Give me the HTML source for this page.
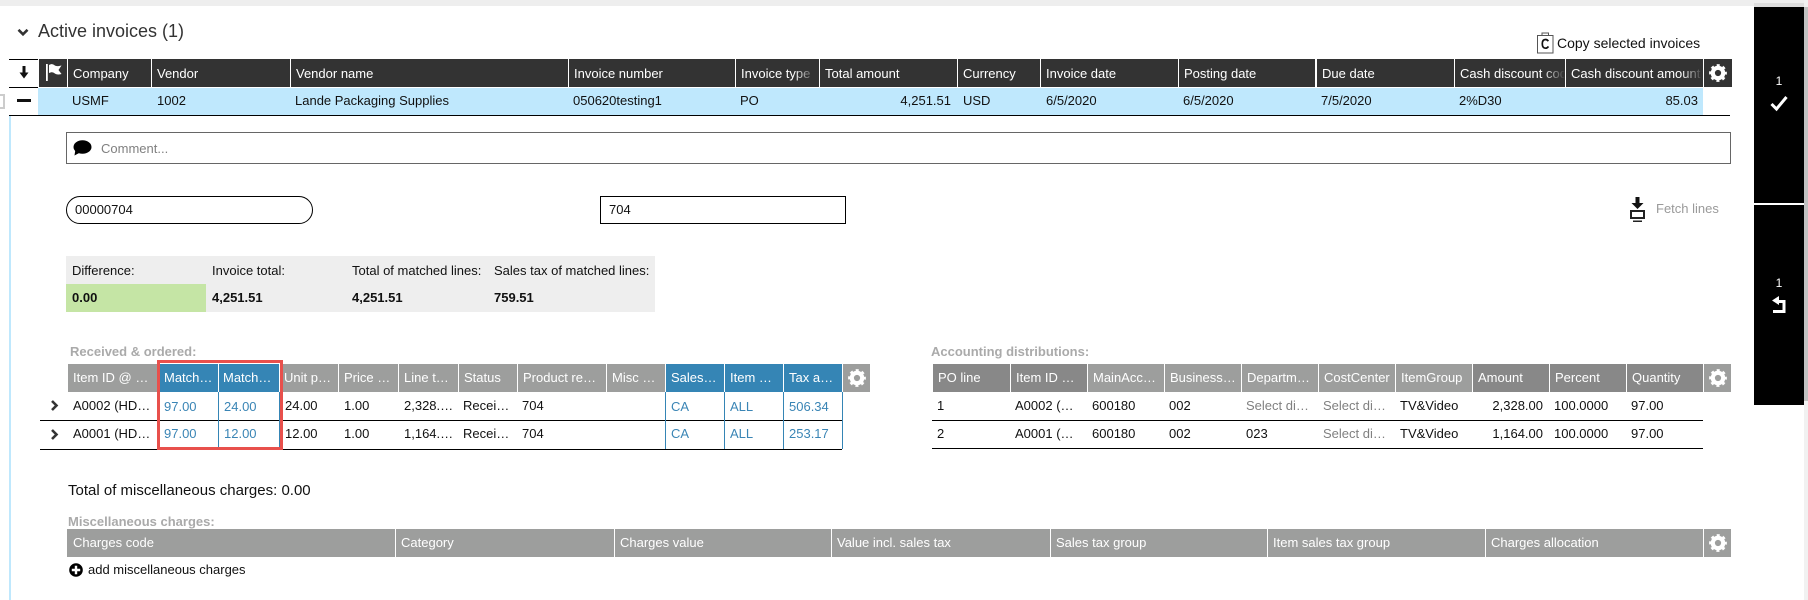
<!DOCTYPE html>
<html><head><meta charset="utf-8"><title>Active invoices</title>
<style>
html,body{margin:0;padding:0;background:#fff}
body{position:relative;width:1808px;height:600px;overflow:hidden;font-family:"Liberation Sans",Arial,sans-serif;font-size:13px;color:#111}
div,span.a{position:absolute;box-sizing:border-box}
.t{position:absolute;white-space:nowrap;line-height:16px;height:16px}
.r{position:absolute;white-space:nowrap;line-height:16px;height:16px;text-align:right}
.h{height:28px;line-height:28px;color:#fff;padding-left:5px;white-space:nowrap;overflow:hidden}
.d{top:59px;background:#333;line-height:30px}
.g{top:364px;background:#9d9e9d}
.k{top:364px;background:#888}
.b{top:364px;background:#3585b5;padding-left:5px}
.m{top:529px;background:#9d9e9d}
.bl{color:#3a85b5}
.mu{color:#808080}
.ln{height:1px;background:#000}
.vl{width:1px;background:#3585b5;top:392px;height:57px}
.lb{position:absolute;font-weight:bold;color:#aaa;white-space:nowrap;line-height:16px}
.f{top:59px;height:28px;width:22px;background:linear-gradient(90deg,rgba(51,51,51,0),#333)}
svg{position:absolute;display:block}
</style></head><body>
<svg width="0" height="0" style="position:absolute"><symbol id="gear" viewBox="-10 -10 20 20"><circle r="5.2" fill="none" stroke="#fff" stroke-width="4.2"/><circle r="7.4" fill="none" stroke="#fff" stroke-width="3" stroke-dasharray="2.9 2.91" stroke-dashoffset="1.45"/></symbol></svg>

<div style="left:0;top:0;width:1808px;height:6px;background:#eee"></div>
<div style="left:1754px;top:3px;width:50px;height:4px;background:#ddd"></div>

<svg style="left:17px;top:28px" width="12" height="9" viewBox="0 0 12 9"><path d="M1.5 1.8L6 6.3L10.5 1.8" fill="none" stroke="#333" stroke-width="2.6"/></svg>
<span class="t" style="left:38px;top:22px;font-size:18px;line-height:18px;height:18px;color:#333">Active invoices (1)</span>

<svg style="left:1537px;top:32px" width="17" height="22" viewBox="0 0 17 22"><path d="M.5 3.5H16V21H.5zM5 3.5V1H11.500V3.500" fill="none" stroke="#555" stroke-width="1"/><path d="M11.300 9.200C10.600 8 9.700 7.500 8.500 7.500C6.500 7.500 5.300 9 5.300 11.800C5.300 14.600 6.500 16.200 8.500 16.200C9.800 16.200 10.700 15.600 11.400 14.400" fill="none" stroke="#111" stroke-width="1.700"/></svg>
<span class="t" style="left:1557px;top:35px;font-size:14px">Copy selected invoices</span>

<!-- main table header -->
<div style="left:9px;top:59px;width:29px;height:1px;background:#000"></div>
<div style="left:9px;top:87px;width:29px;height:1px;background:#000"></div>
<svg style="left:19px;top:66px" width="10" height="13" viewBox="0 0 10 13"><path d="M3.500 0H6.500V6.500H9.500L5 12.500L.5 6.500H3.500Z" fill="#111"/></svg>
<div class="h d" style="left:39px;width:28px"></div>
<svg style="left:45px;top:63px" width="18" height="19" viewBox="0 0 18 19"><path d="M1 1H2.800V18H1z" fill="#fff"/><path d="M4 2C6.500 .6 8 1 9.500 2.300C11 3.500 13 3.300 16.500 2.500L13.500 7L16.500 11C13 12 11 11.500 9.500 10.300C8 9 6.500 8.800 4 10Z" fill="#fff"/></svg>
<div class="h d" style="left:68px;width:83px">Company</div>
<div class="h d" style="left:152px;width:138px">Vendor</div>
<div class="h d" style="left:291px;width:277px">Vendor name</div>
<div class="h d" style="left:569px;width:166px">Invoice number</div>
<div class="h d" style="left:736px;width:83px">Invoice type</div>
<div class="f" style="left:794px"></div>
<div class="h d" style="left:820px;width:137px">Total amount</div>
<div class="h d" style="left:958px;width:82px">Currency</div>
<div class="h d" style="left:1041px;width:137px">Invoice date</div>
<div class="h d" style="left:1179px;width:136px">Posting date</div>
<div class="h d" style="left:1317px;width:137px">Due date</div>
<div class="h d" style="left:1455px;width:110px">Cash discount code</div>
<div class="f" style="left:1543px"></div>
<div class="h d" style="left:1566px;width:137px">Cash discount amount</div>
<div class="f" style="left:1681px"></div>
<div class="h d" style="left:1704px;width:28px"></div>
<svg style="left:1708px;top:63px" width="20" height="20"><use href="#gear"/></svg>

<!-- main row -->
<div style="left:38px;top:88px;width:1665px;height:27px;background:#bfe8fd"></div>
<div style="left:0;top:94px;width:5px;height:15px;border:2px solid #ccc;border-left:0"></div>
<div style="left:17px;top:99px;width:14px;height:3px;background:#111"></div>
<div class="ln" style="left:9px;top:115px;width:1721px"></div>
<span class="t" style="left:72px;top:93px">USMF</span>
<span class="t" style="left:157px;top:93px">1002</span>
<span class="t" style="left:295px;top:93px">Lande Packaging Supplies</span>
<span class="t" style="left:573px;top:93px">050620testing1</span>
<span class="t" style="left:740px;top:93px">PO</span>
<span class="r" style="left:851px;width:100px;top:93px">4,251.51</span>
<span class="t" style="left:963px;top:93px">USD</span>
<span class="t" style="left:1046px;top:93px">6/5/2020</span>
<span class="t" style="left:1183px;top:93px">6/5/2020</span>
<span class="t" style="left:1321px;top:93px">7/5/2020</span>
<span class="t" style="left:1459px;top:93px">2%D30</span>
<span class="r" style="left:1598px;width:100px;top:93px">85.03</span>

<!-- left accent -->
<div style="left:9px;top:116px;width:2px;height:484px;background:#bfe8fd"></div>

<!-- comment -->
<div style="left:66px;top:132px;width:1665px;height:32px;border:1px solid #666"></div>
<svg style="left:73px;top:140px" width="19" height="16" viewBox="0 0 19 16"><ellipse cx="9.500" cy="7" rx="9" ry="6.800" fill="#000"/><path d="M2.500 9L1.500 15.500L8 12Z" fill="#000"/></svg>
<span class="t mu" style="left:101px;top:141px">Comment...</span>

<!-- inputs -->
<div style="left:66px;top:196px;width:247px;height:28px;border:1px solid #000;border-radius:14px"></div>
<span class="t" style="left:75px;top:202px">00000704</span>
<div style="left:600px;top:196px;width:246px;height:28px;border:1px solid #000"></div>
<span class="t" style="left:609px;top:202px">704</span>

<svg style="left:1630px;top:197px" width="15" height="26" viewBox="0 0 15 26"><path d="M5.500 0H9.500V6H13.500L7.500 12L1.500 6H5.500Z" fill="#111"/><path d="M1 14H14V21H1Z" fill="none" stroke="#222" stroke-width="2"/><path d="M3 23.500H12V25H3Z" fill="#222"/></svg>
<span class="t" style="left:1656px;top:201px;color:#9a9a9a">Fetch lines</span>

<!-- summary -->
<div style="left:66px;top:256px;width:589px;height:56px;background:#eee"></div>
<div style="left:66px;top:284px;width:140px;height:28px;background:#c5e5a5"></div>
<span class="t" style="left:72px;top:263px">Difference:</span>
<span class="t" style="left:212px;top:263px">Invoice total:</span>
<span class="t" style="left:352px;top:263px">Total of matched lines:</span>
<span class="t" style="left:494px;top:263px">Sales tax of matched lines:</span>
<span class="t" style="left:72px;top:290px;font-weight:bold">0.00</span>
<span class="t" style="left:212px;top:290px;font-weight:bold">4,251.51</span>
<span class="t" style="left:352px;top:290px;font-weight:bold">4,251.51</span>
<span class="t" style="left:494px;top:290px;font-weight:bold">759.51</span>

<!-- received -->
<span class="lb" style="left:70px;top:344px">Received &amp; ordered:</span>
<div class="h g" style="left:68px;width:89px">Item ID @ …</div>
<div class="h b" style="left:160px;width:58px;padding-left:4px">Match…</div>
<div class="h b" style="left:219px;width:60px;padding-left:4px">Match…</div>
<div class="h g" style="left:283px;width:55px;padding-left:1px">Unit p…</div>
<div class="h g" style="left:339px;width:59px">Price …</div>
<div class="h g" style="left:399px;width:59px">Line t…</div>
<div class="h g" style="left:459px;width:58px">Status</div>
<div class="h g" style="left:518px;width:88px">Product re…</div>
<div class="h g" style="left:607px;width:58px">Misc …</div>
<div class="h b" style="left:666px;width:58px">Sales…</div>
<div class="h b" style="left:725px;width:58px">Item …</div>
<div class="h b" style="left:784px;width:58px">Tax a…</div>
<div class="h g" style="left:843px;width:27px"></div>
<svg style="left:847px;top:368px" width="20" height="20"><use href="#gear"/></svg>

<svg style="left:50px;top:400px" width="9" height="11" viewBox="0 0 9 11"><path d="M2 1L6.500 5.500L2 10" fill="none" stroke="#333" stroke-width="2.600"/></svg>
<svg style="left:50px;top:429px" width="9" height="11" viewBox="0 0 9 11"><path d="M2 1L6.500 5.500L2 10" fill="none" stroke="#333" stroke-width="2.600"/></svg>
<div class="ln" style="left:40px;top:420px;width:802px"></div>
<div class="ln" style="left:40px;top:449px;width:802px"></div>
<div class="vl" style="left:218px"></div>
<div class="vl" style="left:279px"></div>
<div class="vl" style="left:665px"></div>
<div class="vl" style="left:724px"></div>
<div class="vl" style="left:783px"></div>
<div class="vl" style="left:842px"></div>

<span class="t" style="left:73px;top:398px">A0002 (HD…</span>
<span class="t bl" style="left:164px;top:399px">97.00</span>
<span class="t bl" style="left:224px;top:399px">24.00</span>
<span class="t" style="left:285px;top:398px">24.00</span>
<span class="t" style="left:344px;top:398px">1.00</span>
<span class="t" style="left:404px;top:398px">2,328.…</span>
<span class="t" style="left:463px;top:398px">Recei…</span>
<span class="t" style="left:522px;top:398px">704</span>
<span class="t bl" style="left:671px;top:399px">CA</span>
<span class="t bl" style="left:730px;top:399px">ALL</span>
<span class="t bl" style="left:789px;top:399px">506.34</span>

<span class="t" style="left:73px;top:426px">A0001 (HD…</span>
<span class="t bl" style="left:164px;top:426px">97.00</span>
<span class="t bl" style="left:224px;top:426px">12.00</span>
<span class="t" style="left:285px;top:426px">12.00</span>
<span class="t" style="left:344px;top:426px">1.00</span>
<span class="t" style="left:404px;top:426px">1,164.…</span>
<span class="t" style="left:463px;top:426px">Recei…</span>
<span class="t" style="left:522px;top:426px">704</span>
<span class="t bl" style="left:671px;top:426px">CA</span>
<span class="t bl" style="left:730px;top:426px">ALL</span>
<span class="t bl" style="left:789px;top:426px">253.17</span>

<div style="left:157px;top:360px;width:126px;height:90px;border:3px solid #e8504c"></div>

<!-- accounting -->
<span class="lb" style="left:931px;top:344px">Accounting distributions:</span>
<div class="h k" style="left:933px;width:77px">PO line</div>
<div class="h k" style="left:1011px;width:76px">Item ID …</div>
<div class="h g" style="left:1088px;width:76px">MainAcc…</div>
<div class="h g" style="left:1165px;width:76px">Business…</div>
<div class="h g" style="left:1242px;width:76px">Departm…</div>
<div class="h g" style="left:1319px;width:76px">CostCenter</div>
<div class="h g" style="left:1396px;width:76px">ItemGroup</div>
<div class="h k" style="left:1473px;width:76px">Amount</div>
<div class="h k" style="left:1550px;width:76px">Percent</div>
<div class="h k" style="left:1627px;width:76px">Quantity</div>
<div class="h g" style="left:1704px;width:27px"></div>
<svg style="left:1708px;top:368px" width="20" height="20"><use href="#gear"/></svg>
<div class="ln" style="left:932px;top:420px;width:771px"></div>
<div class="ln" style="left:932px;top:448px;width:771px"></div>

<span class="t" style="left:937px;top:398px">1</span>
<span class="t" style="left:1015px;top:398px">A0002 (…</span>
<span class="t" style="left:1092px;top:398px">600180</span>
<span class="t" style="left:1169px;top:398px">002</span>
<span class="t mu" style="left:1246px;top:398px">Select di…</span>
<span class="t mu" style="left:1323px;top:398px">Select di…</span>
<span class="t" style="left:1400px;top:398px">TV&amp;Video</span>
<span class="r" style="left:1463px;width:80px;top:398px">2,328.00</span>
<span class="t" style="left:1554px;top:398px">100.0000</span>
<span class="t" style="left:1631px;top:398px">97.00</span>

<span class="t" style="left:937px;top:426px">2</span>
<span class="t" style="left:1015px;top:426px">A0001 (…</span>
<span class="t" style="left:1092px;top:426px">600180</span>
<span class="t" style="left:1169px;top:426px">002</span>
<span class="t" style="left:1246px;top:426px">023</span>
<span class="t mu" style="left:1323px;top:426px">Select di…</span>
<span class="t" style="left:1400px;top:426px">TV&amp;Video</span>
<span class="r" style="left:1463px;width:80px;top:426px">1,164.00</span>
<span class="t" style="left:1554px;top:426px">100.0000</span>
<span class="t" style="left:1631px;top:426px">97.00</span>

<!-- misc -->
<span class="t" style="left:68px;top:483px;font-size:15px">Total of miscellaneous charges: 0.00</span>
<span class="lb" style="left:68px;top:514px">Miscellaneous charges:</span>
<div class="h m" style="left:67px;width:328px;padding-left:6px">Charges code</div>
<div class="h m" style="left:396px;width:218px">Category</div>
<div class="h m" style="left:615px;width:216px">Charges value</div>
<div class="h m" style="left:832px;width:218px">Value incl. sales tax</div>
<div class="h m" style="left:1051px;width:216px">Sales tax group</div>
<div class="h m" style="left:1268px;width:217px">Item sales tax group</div>
<div class="h m" style="left:1486px;width:217px">Charges allocation</div>
<div class="h m" style="left:1704px;width:27px"></div>
<svg style="left:1708px;top:533px" width="20" height="20"><use href="#gear"/></svg>
<svg style="left:69px;top:563px" width="14" height="14" viewBox="0 0 14 14"><circle cx="7" cy="7" r="6.800" fill="#000"/><path d="M5.800 2.800H8.200V5.800H11.200V8.200H8.200V11.200H5.800V8.200H2.800V5.800H5.800Z" fill="#fff"/></svg>
<span class="t" style="left:88px;top:562px">add miscellaneous charges</span>

<!-- right panel -->
<div style="left:1754px;top:7px;width:50px;height:398px;background:#000"></div>
<div style="left:1754px;top:203px;width:50px;height:2px;background:#fff"></div>
<span class="t" style="left:1754px;width:50px;text-align:center;top:73px;color:#fff;font-size:12px">1</span>
<svg style="left:1770px;top:95px" width="18" height="17" viewBox="0 0 18 17"><path d="M1.500 9L6.500 14L16.500 2" fill="none" stroke="#fff" stroke-width="3"/></svg>
<span class="t" style="left:1754px;width:50px;text-align:center;top:275px;color:#fff;font-size:12px">1</span>
<svg style="left:1771px;top:296px" width="15" height="19" viewBox="0 0 15 19"><path d="M2 15.500H13V5.500H7" fill="none" stroke="#fff" stroke-width="3"/><path d="M8 0V9L1 4.500Z" fill="#fff"/></svg>

<!-- scrollbar -->
<div style="left:1804px;top:0;width:4px;height:600px;background:#f1f1f1"></div>
<div style="left:1804px;top:7px;width:4px;height:394px;background:#c1c1c1"></div>
</body></html>
